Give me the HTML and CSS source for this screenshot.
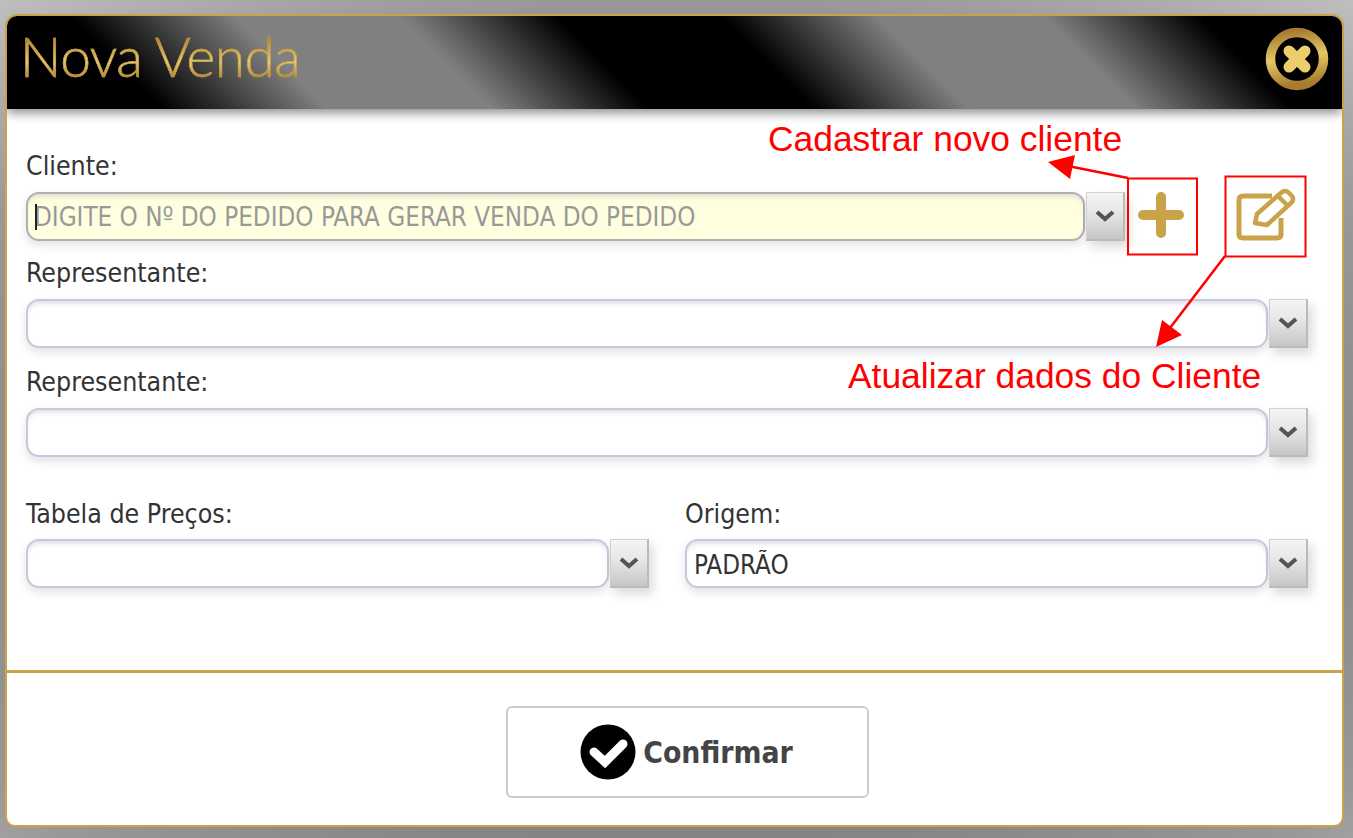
FILE: index.html
```html
<!DOCTYPE html>
<html lang="pt-BR">
<head>
<meta charset="utf-8">
<title>Nova Venda</title>
<link rel="stylesheet" href="styles.css">
</head>
<body>
<div class="modal">
  <header class="modal-head">
    <h1 class="modal-title">Nova Venda</h1>
    <button class="close" type="button" aria-label="Fechar">
      <svg viewBox="0 0 66 66" width="66" height="66">
        <defs>
          <linearGradient id="ring" x1="0.2" y1="0" x2="0.35" y2="1">
            <stop offset="0" stop-color="#a87b30"/>
            <stop offset="0.5" stop-color="#e6c766"/>
            <stop offset="1" stop-color="#a87b30"/>
          </linearGradient>
        </defs>
        <circle cx="33" cy="33" r="26.500" fill="none" stroke="url(#ring)" stroke-width="9.500"/>
        <path d="M25 25 L41 41 M41 25 L25 41" stroke="#eccf6c" stroke-width="11" stroke-linecap="round"/>
      </svg>
    </button>
  </header>

  <form class="form">
    <div class="field field-client">
      <label class="label">Cliente:</label>
      <div class="row">
        <div class="combo combo-client">
          <input class="input input-client" type="text" placeholder="DIGITE O Nº DO PEDIDO PARA GERAR VENDA DO PEDIDO">
          <span class="caret"></span>
          <span class="drop"><svg viewBox="0 0 20 12" width="20" height="12"><path d="M2 2 L10 9 L18 2" fill="none" stroke="#555" stroke-width="4"/></svg></span>
        </div>
        <button class="icon-btn icon-plus" type="button" aria-label="Novo cliente">
          <svg viewBox="0 0 46 46" width="46" height="46"><path d="M23 5 V41 M5 23 H41" stroke="#c9a24a" stroke-width="10" stroke-linecap="round"/></svg>
        </button>
        <button class="icon-btn icon-edit" type="button" aria-label="Editar cliente">
          <svg viewBox="0 0 60 52" width="60" height="52">
            <path d="M36 7 H7 Q3 7 3 11 V45 Q3 49 7 49 H41 Q45 49 45 45 V29" fill="none" stroke="#c9a24a" stroke-width="5"/>
            <path d="M19 34 L21 25 L46 3 Q49 1 52 3 L56 7 Q58 10 56 13 L31 36 Z M42 7 L52 17" fill="none" stroke="#c9a24a" stroke-width="4.500" stroke-linejoin="round"/>
          </svg>
        </button>
      </div>
    </div>

    <div class="field field-rep1">
      <label class="label">Representante:</label>
      <div class="combo">
        <input class="input" type="text">
        <span class="drop"><svg viewBox="0 0 20 12" width="20" height="12"><path d="M2 2 L10 9 L18 2" fill="none" stroke="#555" stroke-width="4"/></svg></span>
      </div>
    </div>

    <div class="field field-rep2">
      <label class="label">Representante:</label>
      <div class="combo">
        <input class="input" type="text">
        <span class="drop"><svg viewBox="0 0 20 12" width="20" height="12"><path d="M2 2 L10 9 L18 2" fill="none" stroke="#555" stroke-width="4"/></svg></span>
      </div>
    </div>

    <div class="split">
      <div class="field">
        <label class="label">Tabela de Preços:</label>
        <div class="combo">
          <input class="input" type="text">
          <span class="drop"><svg viewBox="0 0 20 12" width="20" height="12"><path d="M2 2 L10 9 L18 2" fill="none" stroke="#555" stroke-width="4"/></svg></span>
        </div>
      </div>
      <div class="field">
        <label class="label">Origem:</label>
        <div class="combo">
          <input class="input" type="text" value="PADRÃO">
          <span class="drop"><svg viewBox="0 0 20 12" width="20" height="12"><path d="M2 2 L10 9 L18 2" fill="none" stroke="#555" stroke-width="4"/></svg></span>
        </div>
      </div>
    </div>
  </form>

  <footer class="modal-foot">
    <button class="confirm" type="button">
      <svg viewBox="0 0 56 56" width="56" height="56"><circle cx="28" cy="28" r="27.500" fill="#000"/><path d="M14 28 L25 38 L43 20" fill="none" stroke="#fff" stroke-width="9" stroke-linecap="round"/></svg>
      <span>Confirmar</span>
    </button>
  </footer>
</div>

<div class="note note-new">Cadastrar novo cliente</div>
<div class="note note-edit">Atualizar dados do Cliente</div>
<svg class="marks" viewBox="0 0 1353 838" width="1353" height="838" aria-hidden="true">
  <rect x="1128" y="178.500" width="69" height="76" fill="none" stroke="#f00" stroke-width="2"/>
  <rect x="1225.500" y="176.500" width="80" height="80" fill="none" stroke="#f00" stroke-width="2"/>
  <path d="M1128 178 L1068 166" stroke="#f00" stroke-width="2.500"/>
  <path d="M1048 162 L1075 155 L1070 179 Z" fill="#f00"/>
  <path d="M1225 256 L1170 328" stroke="#f00" stroke-width="2.500"/>
  <path d="M1156 347 L1162 320 L1182 335 Z" fill="#f00"/>
</svg>
</body>
</html>
```
FILE: styles.css
```css
* { box-sizing: border-box; }

html, body { height: 100%; }

body {
  margin: 0;
  height: 838px;
  padding: 14px 9px 11px 5px;
  overflow: hidden;
  position: relative;
  background: radial-gradient(ellipse 75% 75% at 50% 60%, #7c7c7c 0%, #858585 55%, #989898 80%, #c0c0c0 105%);
  font-family: "DejaVu Sans", Tahoma, sans-serif;
  font-stretch: condensed;
}

.modal {
  height: 813px;
  display: flex;
  flex-direction: column;
  background: #fff;
  border: 2px solid #c9a24a;
  border-radius: 12px 12px 10px 10px;
  overflow: hidden;
}

.modal-head {
  flex: 0 0 93px;
  display: flex;
  align-items: center;
  justify-content: space-between;
  padding: 0 12px 8px 13px;
  background: linear-gradient(45deg, #000 11%, #808080 22.500%, #808080 34%, #000 45%, #000 56.500%, #808080 67.500%, #808080 79%, #000 90%);
  box-shadow: 0 4px 10px rgba(0, 0, 0, 0.45);
  position: relative;
}

.modal-title {
  margin: 0 0 5px;
  font-family: Lato, sans-serif;
  font-stretch: normal;
  font-weight: 300;
  font-size: 55px;
  line-height: 60px;
  letter-spacing: -0.500px;
  color: transparent;
  background: linear-gradient(180deg, #a87c30 15%, #e6c96e 60%, #b58a3a 85%);
  -webkit-background-clip: text;
  background-clip: text;
  -webkit-text-stroke: 0.500px #c39a45;
}

.close {
  width: 66px;
  height: 66px;
  padding: 0;
  border: 0;
  background: none;
}

.close svg, .icon-btn svg, .confirm svg, .drop svg { display: block; }

.form {
  flex: 1;
  padding: 43px 34px 0 19px;
}

.label {
  display: block;
  height: 28px;
  margin-bottom: 11px;
  font-size: 26.500px;
  line-height: 28px;
  color: #333;
}

.field-rep1 { margin-top: 18px; }
.field-rep2 { margin-top: 20px; }
.field-rep1 .label, .field-rep2 .label { margin-bottom: 12px; }

.row {
  display: flex;
  align-items: center;
}

.combo {
  position: relative;
  flex: 1;
  display: flex;
  height: 49px;
}

.input {
  flex: 1;
  min-width: 0;
  height: 100%;
  padding: 2px 7px 0;
  font: inherit;
  font-size: 25.750px;
  color: #333;
  background: #fff;
  border: 2px solid #c5cadb;
  border-radius: 13px;
  box-shadow: inset 0 5px 6px -4px rgba(120, 120, 150, 0.35), 0 4px 10px rgba(0, 0, 0, 0.12);
  outline: none;
}

.input::placeholder { color: #999; opacity: 1; }

.input-client {
  padding-left: 6px;
  background: #ffffe0;
  border-color: #b0b0b0;
}

.caret {
  position: absolute;
  left: 9px;
  top: 12px;
  width: 2px;
  height: 26px;
  background: #222;
}

.drop {
  flex: 0 0 39px;
  margin-left: 1px;
  display: flex;
  justify-content: center;
  padding-top: 17px;
  background: linear-gradient(180deg, #f4f4f4 0%, #e8e8e8 40%, #c6c6c6 100%);
  border: 1px solid #d0d0d0;
  border-right: 2px solid #bbb;
  border-bottom: 2px solid #bbb;
  box-shadow: 4px 6px 10px rgba(0, 0, 0, 0.15);
}

.combo-client { flex: 0 0 1099px; }

.icon-btn {
  padding: 0;
  border: 0;
  background: none;
}

.icon-plus { margin-left: 13px; margin-top: -2px; }
.icon-edit { margin-left: 52px; margin-top: -2px; }

.split {
  margin-top: 43px;
  display: grid;
  grid-template-columns: 623px 623px;
  column-gap: 36px;
}

.modal-foot {
  flex: 0 0 155px;
  display: flex;
  justify-content: center;
  padding: 33px 0 0 26px;
  border-top: 3px solid #c9a24a;
}

.confirm {
  width: 363px;
  height: 92px;
  display: flex;
  align-items: center;
  justify-content: center;
  gap: 7px;
  padding: 0 2px 0 0;
  background: #fff;
  border: 2px solid #ccc;
  border-radius: 6px;
  font: inherit;
  font-weight: 700;
  font-size: 29.800px;
  color: #444;
}

.note {
  position: absolute;
  font-family: "Liberation Sans", Arial, sans-serif;
  font-stretch: normal;
  font-size: 35.400px;
  line-height: 40px;
  color: #f00;
  white-space: nowrap;
}

.note-new { left: 768px; top: 119px; }
.note-edit { left: 848px; top: 356px; }

.marks {
  position: absolute;
  left: 0;
  top: 0;
  pointer-events: none;
}
```
